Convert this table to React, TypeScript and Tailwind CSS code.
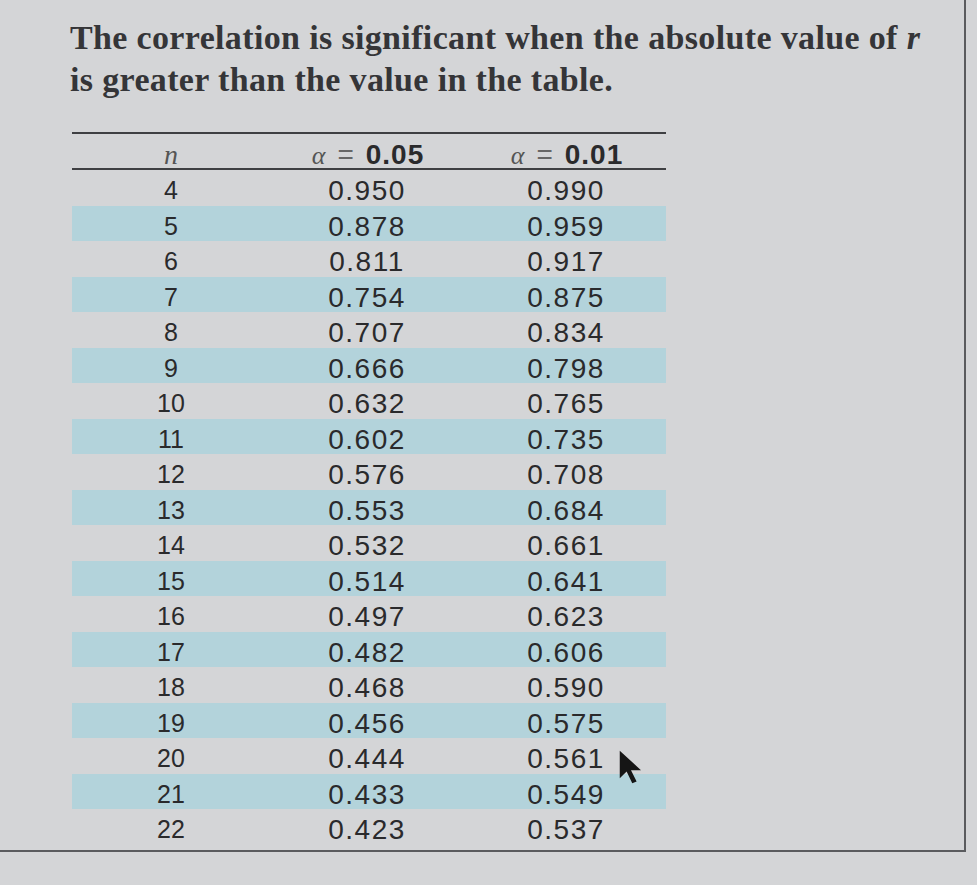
import React from "react";

const rows: [number, string, string][] = [
  [4, "0.950", "0.990"],
  [5, "0.878", "0.959"],
  [6, "0.811", "0.917"],
  [7, "0.754", "0.875"],
  [8, "0.707", "0.834"],
  [9, "0.666", "0.798"],
  [10, "0.632", "0.765"],
  [11, "0.602", "0.735"],
  [12, "0.576", "0.708"],
  [13, "0.553", "0.684"],
  [14, "0.532", "0.661"],
  [15, "0.514", "0.641"],
  [16, "0.497", "0.623"],
  [17, "0.482", "0.606"],
  [18, "0.468", "0.590"],
  [19, "0.456", "0.575"],
  [20, "0.444", "0.561"],
  [21, "0.433", "0.549"],
  [22, "0.423", "0.537"],
];

const serif = { fontFamily: '"Liberation Serif", "Times New Roman", serif' };
const sans = { fontFamily: '"Liberation Sans", Arial, sans-serif' };

const Cursor = () => (
  <svg
    className="absolute left-[616px] top-[748px]"
    width="30"
    height="38"
    viewBox="0 0 24 30"
  >
    <path d="M3 2 L3 24 L8.5 18.5 L13 28 L16.5 26.5 L12 17.5 L20 17.5 Z" fill="#151515" />
  </svg>
);

export default function App() {
  return (
    <div className="relative w-[977px] h-[885px] bg-[#d4d5d7] overflow-hidden">
      <div className="w-[966px] h-[852px] border-r-2 border-b-2 border-[#5a5b5e] pl-[70px] pt-[17px]">
        <div
          className="text-[34px] leading-[42px] font-bold text-[#353538] tracking-[0.35px]"
          style={serif}
        >
          <p>
            The correlation is significant when the absolute value of <i>r</i>
          </p>
          <p>is greater than the value in the table.</p>
        </div>

        <div className="mt-[31px] ml-[2px] w-[594px] text-[#2a2a2c]" style={sans}>
          <div className="border-t-2 border-[#3e3f42] h-[38px] grid grid-cols-[198px_192px_204px] items-center border-b-2">
            <div className="text-center text-[28px] italic text-[#555]" style={serif}>
              n
            </div>
            <div className="flex items-center justify-center gap-[12px] pl-[4px]">
              <span className="text-[26px] italic text-[#555]" style={serif}>α</span>
              <span className="text-[28px] text-[#666]">=</span>
              <span className="text-[28px] font-bold tracking-[1px]">0.05</span>
            </div>
            <div className="flex items-center justify-center gap-[12px] pl-[6px]">
              <span className="text-[26px] italic text-[#555]" style={serif}>α</span>
              <span className="text-[28px] text-[#666]">=</span>
              <span className="text-[28px] font-bold tracking-[1px]">0.01</span>
            </div>
          </div>
          {rows.map(([n, a, b]) => (
            <div
              key={n}
              className={`h-[35.5px] grid grid-cols-[198px_192px_204px] items-center text-[28px] tracking-[1.5px] ${
                n % 2 === 1 ? "bg-[#b3d3db]" : ""
              }`}
            >
              <div className="text-center text-[25px] tracking-[0px]">{n}</div>
              <div className="text-center pl-[2px]">{a}</div>
              <div className="text-center pl-[4px]">{b}</div>
            </div>
          ))}
        </div>
      </div>
      <Cursor />
    </div>
  );
}
